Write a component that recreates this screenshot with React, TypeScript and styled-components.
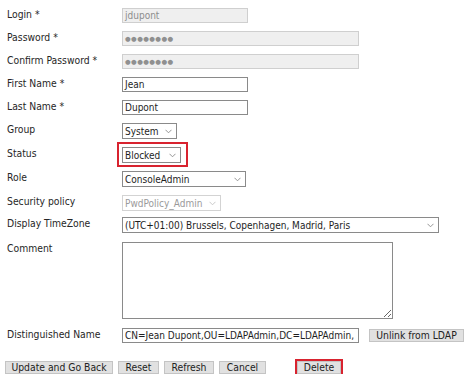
import React from "react";
import styled, { createGlobalStyle } from "styled-components";

const Global = createGlobalStyle`
  html, body { margin: 0; padding: 0; background: #ffffff; }
  body {
    font-family: "DejaVu Sans Condensed", "DejaVu Sans", sans-serif;
    font-size: 10.3px;
    color: #222222;
  }
  * { box-sizing: border-box; }
`;

const Form = styled.div`
  display: flex;
  flex-direction: column;
  padding: 8px 0 0 5px;
  width: 474px;
`;

const Row = styled.div<{ $h: number }>`
  display: grid;
  grid-template-columns: 117px 1fr;
  height: ${(p) => p.$h}px;
  align-items: start;
`;

const Label = styled.div`
  padding-left: 2px;
  line-height: 12px;
  white-space: nowrap;
  color: #262626;
`;

const Field = styled.div`
  display: flex;
  align-items: center;
  gap: 10px;
  font-size: 10px;
`;

const TextBox = styled.div<{ $w: number; $disabled?: boolean }>`
  width: ${(p) => p.$w}px;
  height: 15px;
  border: 1px solid ${(p) => (p.$disabled ? "#cfcfcf" : "#8a8a8a")};
  background: ${(p) => (p.$disabled ? "#efefef" : "#ffffff")};
  color: ${(p) => (p.$disabled ? "#8d8d8d" : "#1e1e1e")};
  padding: 0 2px;
  line-height: 13px;
  white-space: nowrap;
  overflow: hidden;
`;

const Dots = styled.span`
  font-family: "DejaVu Sans", sans-serif;
  font-size: 6.5px;
  letter-spacing: 0.4px;
  color: #909090;
  vertical-align: 1px;
`;

const SelectBox = styled.div<{ $w: number; $disabled?: boolean }>`
  width: ${(p) => p.$w}px;
  height: 16px;
  border: 1px solid ${(p) => (p.$disabled ? "#d3d3d3" : "#8a8a8a")};
  background: #ffffff;
  color: ${(p) => (p.$disabled ? "#9a9a9a" : "#1e1e1e")};
  display: flex;
  align-items: center;
  justify-content: space-between;
  gap: 3px;
  padding: 0 4px 0 2px;
  white-space: nowrap;
`;

const Chevron = styled.svg`
  width: 7px;
  height: 5px;
  flex: none;
`;

const Highlight = styled.div`
  position: relative;
  &::after {
    content: "";
    position: absolute;
    left: -5px;
    top: -5px;
    right: -7px;
    bottom: -4px;
    border: 2px solid #d8232f;
    pointer-events: none;
  }
`;

const Area = styled.textarea`
  width: 271px;
  height: 77px;
  border: 1px solid #8a8a8a;
  background: #fff;
  margin: 0;
  padding: 2px;
  font: inherit;
`;

const Button = styled.button<{ $w: number; $danger?: boolean }>`
  width: ${(p) => p.$w}px;
  height: 13px;
  padding: 0;
  margin: 0;
  border: 1px solid #c4c4c4;
  background: #e1e1e1;
  color: #222;
  font-family: inherit;
  font-size: 10.3px;
  line-height: 11px;
  white-space: nowrap;
  outline: ${(p) => (p.$danger ? "2px solid #d8232f" : "none")};
`;

const ButtonBar = styled.div`
  display: flex;
  gap: 5px;
`;

const Spacer = styled.div<{ $w: number }>`
  width: ${(p) => p.$w}px;
`;

const Select = ({ w, value, disabled }: { w: number; value: string; disabled?: boolean }) => (
  <SelectBox $w={w} $disabled={disabled}>
    <span>{value}</span>
    <Chevron viewBox="0 0 7 5">
      <path d="M0.5 0.8 L3.5 3.8 L6.5 0.8" fill="none" stroke={disabled ? "#c4c4c4" : "#8a8a8a"} strokeWidth="0.9" />
    </Chevron>
  </SelectBox>
);

export default function App() {
  return (
    <>
      <Global />
      <Form>
        <Row $h={23}>
          <Label>Login *</Label>
          <Field>
            <TextBox $w={126} $disabled>jdupont</TextBox>
          </Field>
        </Row>
        <Row $h={23}>
          <Label>Password *</Label>
          <Field>
            <TextBox $w={237} $disabled><Dots>●●●●●●●●</Dots></TextBox>
          </Field>
        </Row>
        <Row $h={23}>
          <Label>Confirm Password *</Label>
          <Field>
            <TextBox $w={237} $disabled><Dots>●●●●●●●●</Dots></TextBox>
          </Field>
        </Row>
        <Row $h={23}>
          <Label>First Name *</Label>
          <Field>
            <TextBox $w={126}>Jean</TextBox>
          </Field>
        </Row>
        <Row $h={23}>
          <Label>Last Name *</Label>
          <Field>
            <TextBox $w={126}>Dupont</TextBox>
          </Field>
        </Row>
        <Row $h={24}>
          <Label>Group</Label>
          <Field>
            <Select w={55} value="System" />
          </Field>
        </Row>
        <Row $h={24}>
          <Label>Status</Label>
          <Field>
            <Highlight>
              <Select w={59} value="Blocked" />
            </Highlight>
          </Field>
        </Row>
        <Row $h={24}>
          <Label>Role</Label>
          <Field>
            <Select w={124} value="ConsoleAdmin" />
          </Field>
        </Row>
        <Row $h={22}>
          <Label>Security policy</Label>
          <Field>
            <Select w={99} value="PwdPolicy_Admin" disabled />
          </Field>
        </Row>
        <Row $h={25}>
          <Label>Display TimeZone</Label>
          <Field>
            <Select w={317} value="(UTC+01:00) Brussels, Copenhagen, Madrid, Paris" />
          </Field>
        </Row>
        <Row $h={86}>
          <Label>Comment</Label>
          <Field>
            <Area />
          </Field>
        </Row>
        <Row $h={33}>
          <Label>Distinguished Name</Label>
          <Field>
            <TextBox $w={237}>CN=Jean Dupont,OU=LDAPAdmin,DC=LDAPAdmin,</TextBox>
            <Button $w={95}>Unlink from LDAP</Button>
          </Field>
        </Row>
        <ButtonBar>
          <Button $w={108}>Update and Go Back</Button>
          <Button $w={41}>Reset</Button>
          <Button $w={50}>Refresh</Button>
          <Button $w={47}>Cancel</Button>
          <Spacer $w={21} />
          <Button $w={44} $danger>Delete</Button>
        </ButtonBar>
      </Form>
    </>
  );
}
